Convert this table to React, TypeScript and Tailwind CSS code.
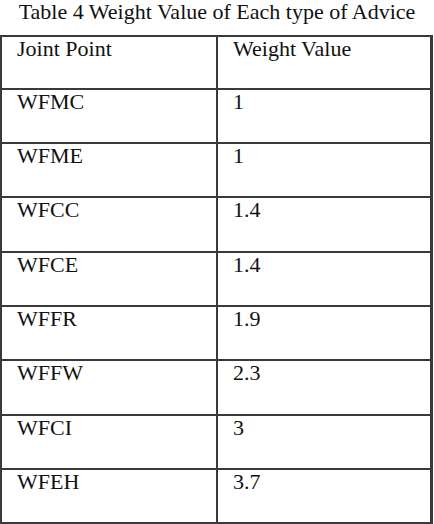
const rows: [string, string][] = [
  ["WFMC", "1"],
  ["WFME", "1"],
  ["WFCC", "1.4"],
  ["WFCE", "1.4"],
  ["WFFR", "1.9"],
  ["WFFW", "2.3"],
  ["WFCI", "3"],
  ["WFEH", "3.7"],
];

const cell = "border-b-2 border-[#3a3a3a] pl-[15px] pt-[1px] align-top font-['Liberation_Serif']";

export default function App() {
  return (
    <div className="w-[434px] h-[524px] bg-white text-[#111] overflow-hidden font-['Liberation_Serif']">
      <div className="h-[35px] pt-[1px] text-center text-[22px] leading-[22px]">
        Table 4 Weight Value of Each type of Advice
      </div>
      <table className="w-[433px] border-collapse border-t-2 border-l-2 border-b-2 border-r-[3px] border-[#3a3a3a] text-[22px] leading-[22px]">
        <tbody>
          <tr className="h-[53px]">
            <td className={`w-[216px] border-r-2 ${cell}`}>Joint Point</td>
            <td className={cell}>Weight Value</td>
          </tr>
          {rows.map(([name, value], i) => (
            <tr key={name} className={i === 2 || i === 5 ? "h-[55px]" : "h-[54px]"}>
              <td className={`w-[216px] border-r-2 ${cell}`}>{name}</td>
              <td className={cell}>{value}</td>
            </tr>
          ))}
        </tbody>
      </table>
    </div>
  );
}
